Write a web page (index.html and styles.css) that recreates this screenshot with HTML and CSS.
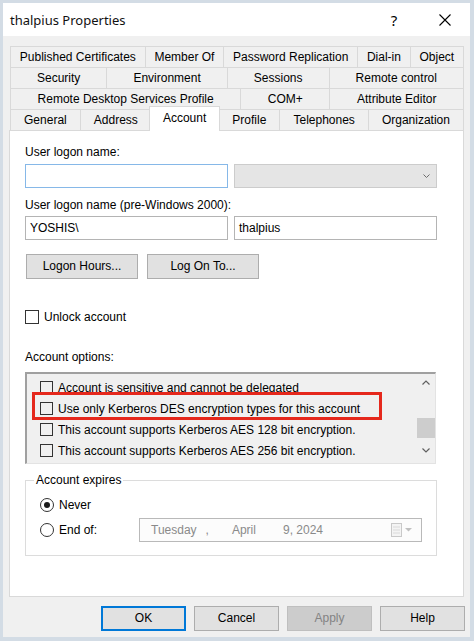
FILE: index.html
```html
<!DOCTYPE html>
<html>
<head>
<meta charset="utf-8">
<link rel="stylesheet" href="styles.css">
</head>
<body>
<div class="window">
  <div class="titlebar">
    <span class="title">thalpius Properties</span>
    <span class="help">?</span>
    <span class="close"><svg width="12" height="12" viewBox="0 0 12 12"><path d="M0.5 0.5 L11.5 11.5 M11.5 0.5 L0.5 11.5" stroke="#000" stroke-width="1.1" fill="none"/></svg></span>
  </div>
  <div class="body">
    <div class="tabs">
      <div class="tabrow">
        <div class="tab">Published Certificates</div>
        <div class="tab">Member Of</div>
        <div class="tab">Password Replication</div>
        <div class="tab">Dial-in</div>
        <div class="tab">Object</div>
      </div>
      <div class="tabrow">
        <div class="tab">Security</div>
        <div class="tab">Environment</div>
        <div class="tab">Sessions</div>
        <div class="tab">Remote control</div>
      </div>
      <div class="tabrow">
        <div class="tab">Remote Desktop Services Profile</div>
        <div class="tab">COM+</div>
        <div class="tab">Attribute Editor</div>
      </div>
      <div class="tabrow">
        <div class="tab">General</div>
        <div class="tab">Address</div>
        <div class="tab selected">Account</div>
        <div class="tab">Profile</div>
        <div class="tab">Telephones</div>
        <div class="tab">Organization</div>
      </div>
    </div>
    <div class="page">
      <div class="label">User logon name:</div>
      <div class="field-row first">
        <div class="input focus"></div>
        <div class="combo"><svg width="7" height="4" viewBox="0 0 7 4"><polyline points="0.5,0.5 3.5,3.5 6.5,0.5" stroke="#6d6d6d" fill="none" stroke-width="1"/></svg></div>
      </div>
      <div class="label second">User logon name (pre-Windows 2000):</div>
      <div class="field-row">
        <div class="input">YOSHIS\</div>
        <div class="input">thalpius</div>
      </div>
      <div class="btn-row">
        <div class="btn wide">Logon Hours...</div>
        <div class="btn wide">Log On To...</div>
      </div>
      <div class="check-row unlock"><span class="box white"></span>Unlock account</div>
      <div class="label opts">Account options:</div>
      <div class="listbox">
        <div class="items">
          <div class="item"><span class="box"></span>Account is sensitive and cannot be delegated</div>
          <div class="item"><span class="box"></span>Use only Kerberos DES encryption types for this account</div>
          <div class="item"><span class="box"></span>This account supports Kerberos AES 128 bit encryption.</div>
          <div class="item"><span class="box"></span>This account supports Kerberos AES 256 bit encryption.</div>
        </div>
        <div class="scrollbar">
          <div class="arrow up"><svg width="8" height="5" viewBox="0 0 8 5"><polyline points="0.5,4.5 4,1 7.5,4.5" stroke="#606060" fill="none" stroke-width="1.2"/></svg></div>
          <div class="track"><div class="thumb"></div></div>
          <div class="arrow down"><svg width="8" height="5" viewBox="0 0 8 5"><polyline points="0.5,0.5 4,4 7.5,0.5" stroke="#606060" fill="none" stroke-width="1.2"/></svg></div>
        </div>
        <div class="highlight"></div>
      </div>
      <fieldset class="expires">
        <legend>Account expires</legend>
        <div class="radio-row"><span class="radio on"></span>Never</div>
        <div class="radio-row end">
          <span class="radio"></span>End of:
          <div class="datepicker">
            <span class="d-day">Tuesday</span><span class="d-comma">,</span><span class="d-month">April</span><span class="d-date">9, 2024</span>
            <svg class="cal" width="22" height="14" viewBox="0 0 22 14"><rect x="0.5" y="0.5" width="10" height="13" fill="#f4f4f4" stroke="#c9c9c9"/><path d="M2 4 H9 M2 7 H9 M2 10 H9" stroke="#dadada"/><polygon points="14,5 21,5 17.5,8.5" fill="#c0c0c0"/></svg>
          </div>
        </div>
      </fieldset>
    </div>
    <div class="buttons">
      <div class="btn dlg default">OK</div>
      <div class="btn dlg">Cancel</div>
      <div class="btn dlg disabled">Apply</div>
      <div class="btn dlg">Help</div>
    </div>
  </div>
</div>
</body>
</html>
```
FILE: styles.css
```css
html, body {
  margin: 0;
  padding: 0;
}
body {
  font-family: "Liberation Sans", Arial, sans-serif;
  font-size: 12px;
  color: #000;
  background: #d3dce5;
}
.window {
  width: 474px;
  height: 641px;
  box-sizing: border-box;
  padding: 3px 4px 4px 3px;
  background: #d3dce5;
  display: flex;
  flex-direction: column;
}
.titlebar {
  height: 33px;
  flex: none;
  background: #fff;
  display: flex;
  align-items: center;
}
.title {
  flex: 1;
  padding-left: 7px;
  font-family: "Noto Sans", "Open Sans", sans-serif;
  font-size: 13px;
  color: #111;
}
.help {
  width: 46px;
  margin-right: 5px;
  text-align: center;
  font-family: "Noto Sans", sans-serif;
  font-size: 15px;
}
.close {
  width: 46px;
  margin-right: 2px;
  display: flex;
  justify-content: center;
  align-items: center;
}
.body {
  flex: 1;
  background: #f0f0f0;
  padding: 10px 6px 6px 6px;
  display: flex;
  flex-direction: column;
}
.tabs {
  margin-left: 1px;
}
.tabrow {
  display: flex;
  height: 21px;
}
.tab {
  flex: 1 1 auto;
  box-sizing: border-box;
  height: 21px;
  line-height: 20px;
  text-align: center;
  white-space: nowrap;
  border-top: 1px solid #d9d9d9;
  border-left: 1px solid #d9d9d9;
  background: #f0f0f0;
}
.tab:last-child {
  border-right: 1px solid #d9d9d9;
}
.tab.selected {
  position: relative;
  z-index: 2;
  height: 25px;
  margin: -3px -2px -1px -2px;
  background: #fff;
  border: 1px solid #d9d9d9;
  border-bottom: none;
  line-height: 22px;
}
.page {
  height: 467px;
  box-sizing: border-box;
  background: #fff;
  border: 1px solid #d9d9d9;
  padding: 14px 26px 0 15px;
}
.label {
  line-height: 15px;
  height: 15px;
}
.label.second {
  margin-top: 10px;
}
.label.opts {
  margin-top: 26px;
}
.field-row {
  display: grid;
  grid-template-columns: 1fr 1fr;
  column-gap: 6px;
  margin-top: 3px;
}
.field-row.first {
  margin-top: 4px;
}
.input {
  height: 24px;
  box-sizing: border-box;
  border: 1px solid #b4b4b4;
  background: #fff;
  padding-left: 4px;
  line-height: 22px;
}
.input.focus {
  border-color: #86b8e8;
}
.combo {
  height: 24px;
  box-sizing: border-box;
  border: 1px solid #cccccc;
  background: #e5e5e5;
  display: flex;
  justify-content: flex-end;
  align-items: center;
  padding-right: 6px;
}
.btn-row {
  display: flex;
  gap: 9px;
  margin-top: 14px;
  margin-left: 1px;
}
.btn {
  height: 25px;
  box-sizing: border-box;
  border: 1px solid #adadad;
  background: #e1e1e1;
  text-align: center;
  line-height: 23px;
}
.btn.wide {
  width: 112px;
}
.check-row {
  display: flex;
  align-items: center;
  height: 15px;
  margin-top: 30px;
}
.box {
  width: 13px;
  height: 13px;
  box-sizing: border-box;
  border: 1px solid #333;
  margin-right: 5px;
  flex: none;
}
.box.white {
  background: #fff;
  width: 14px;
  height: 14px;
}
.listbox {
  position: relative;
  margin-top: 7px;
  width: 411px;
  height: 92px;
  box-sizing: border-box;
  border-top: 2px solid #a0a0a0;
  border-left: 2px solid #a0a0a0;
  border-right: 1px solid #e3e3e3;
  border-bottom: 1px solid #e3e3e3;
  background: #f0f0f0;
  display: flex;
}
.items {
  flex: 1;
  padding: 3px 0 0 13px;
  overflow: hidden;
}
.item {
  height: 21px;
  display: flex;
  align-items: center;
  white-space: nowrap;
}
.scrollbar {
  width: 18px;
  display: flex;
  flex-direction: column;
  background: #f0f0f0;
}
.arrow {
  display: flex;
  justify-content: center;
}
.arrow.up {
  height: 17px;
  align-items: center;
}
.arrow.down {
  height: 20px;
  align-items: flex-start;
  padding-top: 5px;
  box-sizing: border-box;
}
.track {
  flex: 1;
}
.thumb {
  margin-top: 27px;
  height: 20px;
  background: #cdcdcd;
}
.highlight {
  position: absolute;
  left: 5px;
  top: 18px;
  width: 350px;
  height: 28px;
  box-sizing: border-box;
  border: 3px solid #e5281c;
  pointer-events: none;
}
.expires {
  margin: 9px 0 0 0;
  border: 1px solid #dcdcdc;
  padding: 9px 14px 13px 8px;
  min-width: 0;
}
.expires legend {
  padding: 0 2px;
  line-height: 15px;
}
.radio-row {
  display: flex;
  align-items: center;
  height: 16px;
  margin-left: 6px;
}
.radio-row.end {
  height: 24px;
  margin-top: 5px;
}
.radio {
  width: 14px;
  height: 14px;
  box-sizing: border-box;
  border: 1px solid #333;
  border-radius: 50%;
  background: #fff;
  margin-right: 5px;
  display: flex;
  justify-content: center;
  align-items: center;
  flex: none;
}
.radio.on::after {
  content: "";
  width: 6px;
  height: 6px;
  border-radius: 50%;
  background: #1a1a1a;
}
.datepicker {
  margin-left: auto;
  width: 283px;
  height: 24px;
  box-sizing: border-box;
  border: 1px solid #b9b9b9;
  background: #fcfcfc;
  display: flex;
  align-items: center;
  padding-left: 11px;
  color: #8a8a8a;
  white-space: nowrap;
}
.d-comma {
  margin-left: 9px;
}
.d-month {
  margin-left: 23px;
}
.d-date {
  margin-left: 27px;
}
.cal {
  margin-left: auto;
  margin-right: 8px;
}
.buttons {
  display: flex;
  justify-content: flex-end;
  gap: 8px;
  margin-top: 9px;
  margin-right: -1px;
}
.btn.dlg {
  width: 85px;
}
.btn.default {
  border: 2px solid #0078d7;
  line-height: 21px;
}
.btn.disabled {
  background: #cccccc;
  border-color: #bfbfbf;
  color: #838383;
}
```
